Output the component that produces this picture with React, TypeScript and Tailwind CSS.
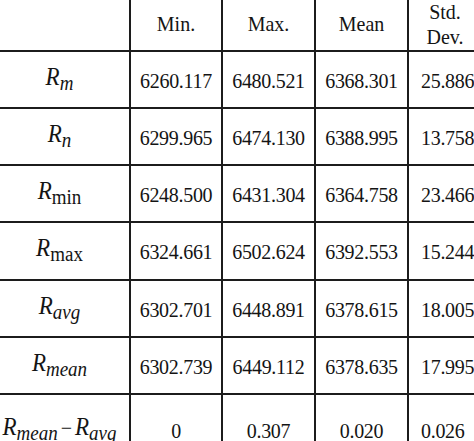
import React from "react";

type TRow = {
  label: React.ReactNode;
  values: string[];
  height: string;
};

const R = ({ sub, italic = true }: { sub: string; italic?: boolean }) => (
  <span className="whitespace-nowrap">
    <span className="italic text-[23px]">R</span>
    <span
      className={`${italic ? "italic" : "not-italic"} text-[19px] align-[-0.25em]`}
    >
      {sub}
    </span>
  </span>
);

const rows: TRow[] = [
  { label: <R sub="m" />, values: ["6260.117", "6480.521", "6368.301", "25.886"], height: "h-[57px]" },
  { label: <R sub="n" />, values: ["6299.965", "6474.130", "6388.995", "13.758"], height: "h-[57px]" },
  { label: <R sub="min" italic={false} />, values: ["6248.500", "6431.304", "6364.758", "23.466"], height: "h-[57px]" },
  { label: <R sub="max" italic={false} />, values: ["6324.661", "6502.624", "6392.553", "15.244"], height: "h-[58px]" },
  { label: <R sub="avg" />, values: ["6302.701", "6448.891", "6378.615", "18.005"], height: "h-[57px]" },
  { label: <R sub="mean" />, values: ["6302.739", "6449.112", "6378.635", "17.995"], height: "h-[57px]" },
  {
    label: (
      <span className="whitespace-nowrap">
        <R sub="mean" />
        <span className="mx-[3px] text-[20px]">−</span>
        <R sub="avg" />
      </span>
    ),
    values: ["0", "0.307", "0.020", "0.026"],
    height: "h-[69px]",
  },
];

const widths = ["w-[144px]", "w-[92px]", "w-[93px]", "w-[93px]", "w-[78px]"];

export default function App() {
  return (
    <div className="w-[474px] h-[441px] overflow-hidden bg-white text-[#141414] font-['Liberation_Serif',serif]">
      <div className="ml-[-13px] w-max">
        {/* header */}
        <div className="flex h-[52px] border-b-2 border-[#1c1c1c]">
          {["", "Min.", "Max.", "Mean", "Std. Dev."].map((h, i) => (
            <div
              key={i}
              className={`${widths[i]} ${i < 4 ? "border-r-2 border-[#1c1c1c]" : "pr-[6px]"} flex items-center justify-center text-center text-[20px] leading-[23px] pb-[3px]`}
            >
              <span className={`inline-block scale-y-[1.1] ${i === 4 ? "w-[44px]" : ""}`}>{h}</span>
            </div>
          ))}
        </div>

        {rows.map((row, r) => (
          <div
            key={r}
            className={`flex ${row.height} ${r < rows.length - 1 ? "border-b-2 border-[#1c1c1c]" : ""}`}
          >
            <div className="w-[144px] border-r-2 border-[#1c1c1c] flex items-center justify-center pl-[3px]">
              <span className="inline-block scale-y-[1.05]">{row.label}</span>
            </div>
            {row.values.map((v, i) => (
              <div
                key={i}
                className={`${widths[i + 1]} ${i < 3 ? "border-r-2 border-[#1c1c1c] justify-center" : "justify-start pl-[12px]"} flex items-center text-[20px] tracking-[-0.3px] whitespace-nowrap`}
              >
                <span className="inline-block scale-y-[1.1]">{v}</span>
              </div>
            ))}
          </div>
        ))}
      </div>
    </div>
  );
}
